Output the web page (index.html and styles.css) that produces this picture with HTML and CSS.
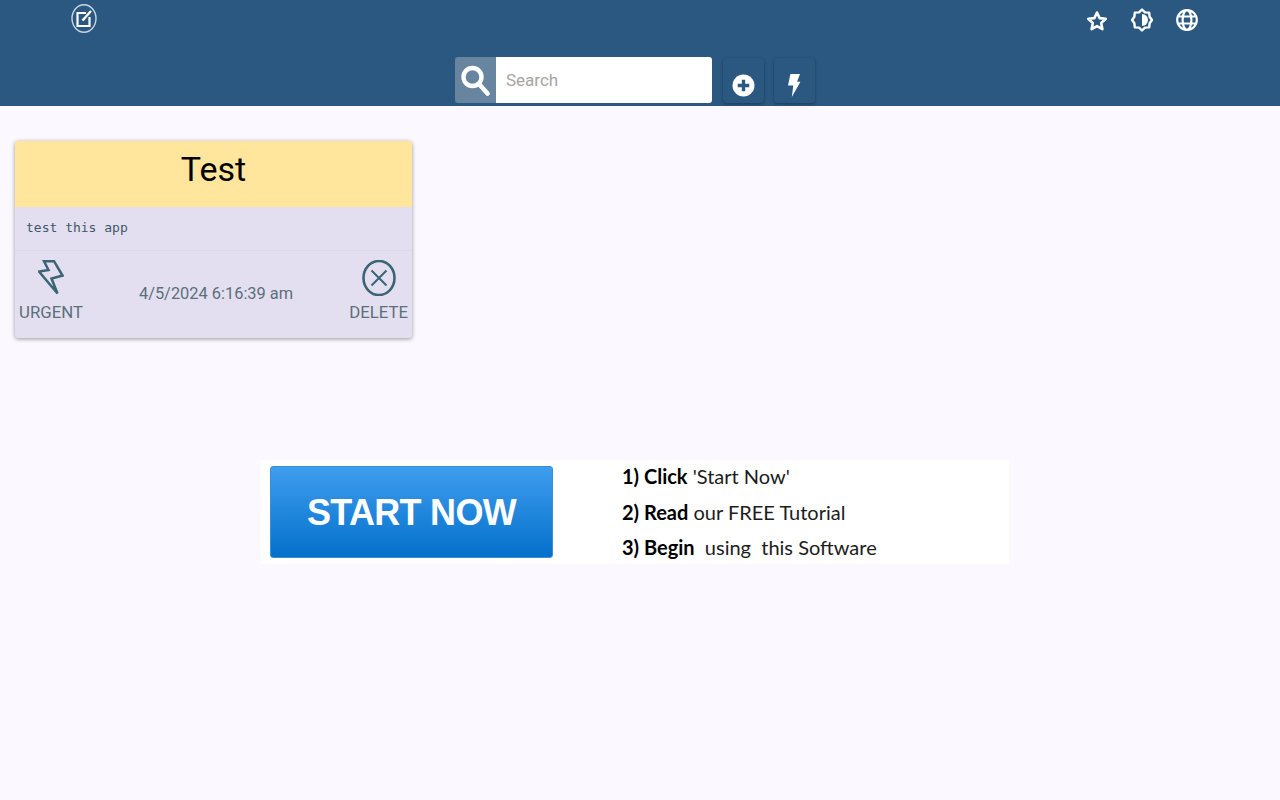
FILE: index.html
```html
<!DOCTYPE html>
<html lang="en">
<head>
  <meta charset="UTF-8" />
  <meta name="viewport" content="width=device-width, initial-scale=1.0"/>
  <title>Notes</title>
  <link rel="stylesheet" href="styles.css">
</head>
<body>

  <header class="topbar">
    <div class="top-row">
      <svg class="logo" viewBox="0 0 26 29" fill="none" stroke="#fff">
        <ellipse cx="13" cy="14.5" rx="12" ry="13.7" stroke="#c9d6e2" stroke-width="1.4"/>
        <path d="M15 9H6.5v13H18.5V13" stroke-width="2.2"/>
        <path d="M11.5 16.5L20 7" stroke-width="2.4"/>
      </svg>
      <div class="top-icons">
        <svg class="top-icon" viewBox="0 0 22 24" fill="none" stroke="#fff" stroke-width="2.6" stroke-linejoin="round">
          <path d="M11 4.5l2.6 5.6 6.2.7-4.6 4.2 1.2 6.2L11 18.1l-5.4 3.1 1.2-6.2-4.6-4.2 6.2-.7z"/>
        </svg>
        <svg class="top-icon" viewBox="0 0 22 24" fill="none" stroke="#fff" stroke-width="2.4" stroke-linejoin="round">
          <path d="M11 1.5l3 2.9 4.2.2.4 4.1 2.4 3.3-2.4 3.3-.4 4.1-4.2.2-3 2.9-3-2.9-4.2-.2-.4-4.1L1 12l2.4-3.3.4-4.1 4.2-.2z"/>
          <path d="M11 6a6 6 0 0 1 0 12z" fill="#fff" stroke="none"/>
        </svg>
        <svg class="top-icon" viewBox="0 0 22 24" fill="none" stroke="#fff" stroke-width="2.2">
          <circle cx="11" cy="12" r="9.8"/>
          <ellipse cx="11" cy="12" rx="4.4" ry="9.8"/>
          <path d="M2.5 8.5h17M2.5 15.5h17"/>
        </svg>
      </div>
    </div>
    <div class="search-row">
      <div class="search">
        <span class="search-addon">
          <svg viewBox="0 0 29 31" fill="none" stroke="#fff">
            <circle cx="11.5" cy="12" r="9" stroke-width="4.4"/>
            <path d="M18 19l8.5 9.5" stroke-width="4.6" stroke-linecap="round"/>
          </svg>
        </span>
        <input class="search-input" type="text" placeholder="Search">
      </div>
      <button class="bar-btn">
        <svg viewBox="0 0 22 22">
          <circle cx="11" cy="11" r="10.5" fill="#fff"/>
          <path d="M11 5.5v11M5.5 11h11" stroke="#2a5880" stroke-width="3.2"/>
        </svg>
      </button>
      <button class="bar-btn">
        <svg viewBox="0 0 13 24">
          <path d="M2.5 0H12.5L9.5 8H13L4 24l1.5-12H0z" fill="#fff"/>
        </svg>
      </button>
    </div>
  </header>

  <main class="content">
    <div class="note">
      <div class="note-title">Test</div>
      <div class="note-body">test this app</div>
      <div class="note-foot">
        <div class="note-action">
          <svg class="urgent-icon" viewBox="0 0 26 36" fill="none" stroke="#3b6474" stroke-width="2.5">
            <path d="M6 1.2H16L24.5 15.5 13.5 18.5 19.5 33.5 1 11.5 10.5 10z"/>
          </svg>
          <span>URGENT</span>
        </div>
        <div class="note-date">4/5/2024 6:16:39 am</div>
        <div class="note-action">
          <svg class="delete-icon" viewBox="0 0 34 36" fill="none" stroke="#3b6474">
            <ellipse cx="17" cy="18" rx="15.5" ry="17" stroke-width="2.6"/>
            <path d="M9.5 10.5l15 15M24.5 10.5l-15 15" stroke-width="2"/>
          </svg>
          <span>DELETE</span>
        </div>
      </div>
    </div>

    <div class="banner">
      <div class="start-btn">START NOW</div>
      <div class="steps">
        <div><b>1) Click</b> 'Start Now'</div>
        <div><b>2) Read</b> our FREE Tutorial</div>
        <div><b>3) Begin</b> &nbsp;using &nbsp;this Software</div>
      </div>
    </div>
  </main>

</body>
</html>
```

FILE: styles.css
```css
* {
  box-sizing: border-box;
}

body {
  margin: 0;
  min-height: 100vh;
  background: #fbf9ff;
  font-family: Roboto, sans-serif;
}

.topbar {
  height: 106px;
  background: #2a5880;
  padding-top: 4px;
}

.top-row {
  display: flex;
  justify-content: space-between;
  height: 53px;
  padding: 0 82px 0 71px;
}

.logo {
  width: 26px;
  height: 29px;
}

.top-icons {
  display: flex;
  gap: 23px;
  padding-top: 4px;
}

.top-icon {
  width: 22px;
  height: 24px;
}

.search-row {
  display: flex;
  justify-content: center;
}

.search {
  display: flex;
  width: 257px;
  height: 46px;
  margin-right: 11px;
  border-radius: 3px;
  overflow: hidden;
}

.search-addon {
  display: flex;
  align-items: center;
  justify-content: center;
  width: 41px;
  background: #68859f;
}

.search-addon svg {
  width: 29px;
  height: 31px;
}

.search-input {
  flex: 1;
  min-width: 0;
  border: none;
  padding: 0 10px;
  font-family: Roboto, sans-serif;
  font-size: 17px;
  background: #fff;
}

.search-input::placeholder {
  color: #a8a4a2;
}

.bar-btn {
  display: flex;
  align-items: flex-end;
  justify-content: center;
  width: 41px;
  height: 45px;
  margin: 1px 10px 0 0;
  padding: 0 0 6px;
  border: none;
  border-radius: 4px;
  background: #2a5880;
  box-shadow: 0 1px 3px rgba(0,0,0,0.35);
}

.bar-btn svg {
  height: 23px;
}

.content {
  padding: 35px 15px 0;
}

.note {
  width: 397px;
  height: 197px;
  border-radius: 3px;
  overflow: hidden;
  background: #e3dff0;
  box-shadow: 0 1px 4px rgba(0,0,0,0.4);
}

.note-title {
  height: 66px;
  background: #ffe69c;
  color: #000;
  font-size: 34px;
  line-height: 57px;
  text-align: center;
}

.note-body {
  height: 44px;
  padding: 13px 11px 0;
  border-bottom: 1px solid #dcd8e6;
  color: #3f5866;
  font-family: "DejaVu Sans Mono", monospace;
  font-size: 13px;
}

.note-foot {
  display: flex;
  justify-content: space-between;
  align-items: center;
  padding: 0 4px;
  height: 79px;
  color: #5b7079;
}

.note-action {
  display: flex;
  flex-direction: column;
  align-items: center;
  font-size: 16.8px;
}

.urgent-icon {
  width: 26px;
  height: 36px;
  margin-bottom: 6px;
}

.delete-icon {
  width: 34px;
  height: 36px;
  margin-bottom: 6px;
}

.note-date {
  margin-top: 5px;
  font-size: 16.4px;
}

.banner {
  display: flex;
  width: 748px;
  height: 104px;
  margin: 122px 0 0 246px;
  padding-left: 9px;
  background: #fff;
  font-family: Lato, sans-serif;
}

.start-btn {
  width: 283px;
  height: 92px;
  margin-top: 6px;
  border: 1px solid #3a8fd6;
  border-radius: 3px;
  background: linear-gradient(#3f9dee, #0470cb);
  color: #fff;
  font-family: "Liberation Sans", sans-serif;
  font-size: 36px;
  font-weight: 700;
  line-height: 92px;
  text-align: center;
  letter-spacing: -0.7px;
}

.steps {
  margin: -1px 0 0 69px;
  color: #1c1c1c;
  font-size: 20px;
  line-height: 35.5px;
}

.steps b {
  color: #000;
}
```
